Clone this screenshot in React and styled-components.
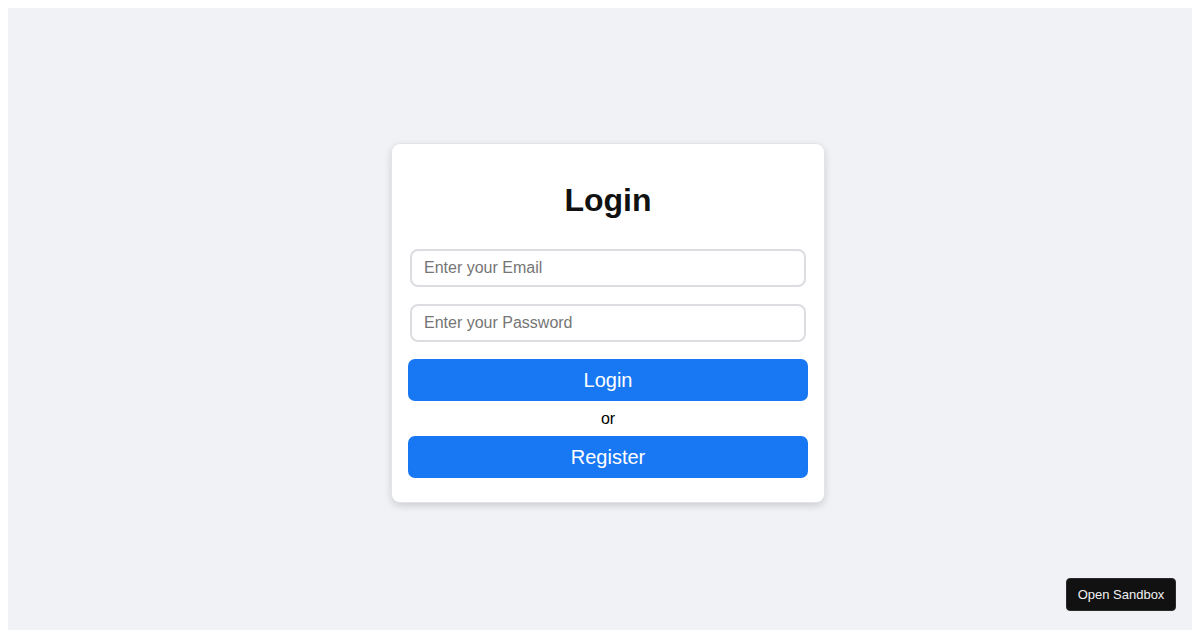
import React from "react";
import styled, { createGlobalStyle } from "styled-components";

const GlobalStyle = createGlobalStyle`
  body {
    font-family: "Liberation Sans", Arial, sans-serif;
  }
`

const Page = styled.div`
  width: 100vw;
  height: 100vh;
  background-color: #f0f2f5;
  display: flex;
  align-items: center;
  justify-content: center;
`

const Card = styled.div`
  width: 432px;
  box-sizing: border-box;
  padding: 24px 16px 24px;
  background: #fff;
  border-radius: 8px;
  box-shadow: 0 0 0 1px #e3e4e8, 0 3px 8px rgba(0, 0, 0, 0.18);
  display: flex;
  flex-direction: column;
  align-items: center;
`

const Title = styled.h1`
  font-size: 32px;
  font-weight: 700;
  color: #111;
  margin: 14px 0 30px;
  line-height: 37px;
`

const Input = styled.input`
  box-sizing: border-box;
  width: 396px;
  height: 38px;
  margin-bottom: ${(p) => p.$gap || 0}px;
  padding: 0 12px;
  border: 2px solid #dcdde1;
  border-radius: 8px;
  font-family: inherit;
  font-size: 16px;
  color: #333;
  outline: none;

  &::placeholder {
    color: #757575;
  }
`

const Button = styled.button`
  width: 100%;
  height: 42px;
  border: none;
  border-radius: 7px;
  background-color: #1877f2;
  color: #fff;
  font-family: inherit;
  font-size: 20px;
  cursor: pointer;
`

const Or = styled.p`
  margin: 0;
  height: 35px;
  line-height: 35px;
  font-size: 16px;
  color: #000;
`

const SandboxButton = styled.button`
  position: fixed;
  right: 24px;
  bottom: 19px;
  height: 33px;
  width: 110px;
  padding: 0;
  border: 1px solid #2a2a2a;
  border-radius: 4px;
  background: #111;
  color: #f2f2f2;
  font-family: "Liberation Sans", Arial, sans-serif;
  font-size: 13px;
  cursor: pointer;
`

const App = () => {
  return (
    <>
      <GlobalStyle />
      <Page>
        <Card>
          <Title>Login</Title>
          <Input type="email" placeholder="Enter your Email" $gap={17} />
          <Input type="password" placeholder="Enter your Password" $gap={17} />
          <Button>Login</Button>
          <Or>or</Or>
          <Button>Register</Button>
        </Card>
      </Page>
      <SandboxButton>Open Sandbox</SandboxButton>
    </>
  )
}

export default App
